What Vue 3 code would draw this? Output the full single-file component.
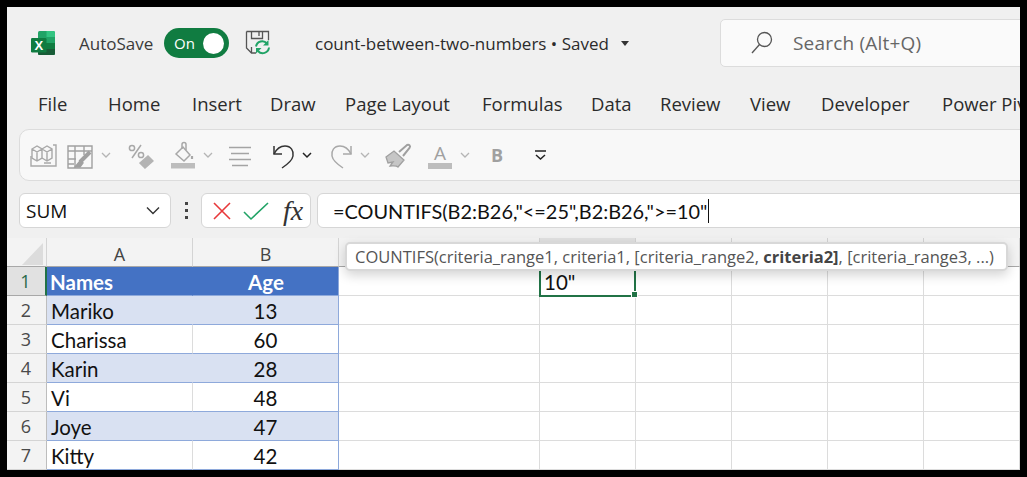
<script setup>
const tabs = ['File', 'Home', 'Insert', 'Draw', 'Page Layout', 'Formulas', 'Data', 'Review', 'View', 'Developer', 'Power Pivot']
const people = [
  ['Mariko', 13], ['Charissa', 60], ['Karin', 28], ['Vi', 48], ['Joye', 47], ['Kitty', 42]
]
const spare = [1, 2, 3, 4, 5]
</script>

<template>
  <div class="app">
    <header class="titlebar">
      <svg class="logo" width="24" height="24" viewBox="0 0 24 24">
        <rect x="7" y="0" width="17" height="24" rx="1.5" fill="#21a366" />
        <path d="M15.5 0H22.5A1.5 1.5 0 0 1 24 1.5V6H15.5Z" fill="#33c481" />
        <rect x="15.5" y="6" width="8.5" height="6" fill="#21a366" />
        <rect x="7" y="12" width="17" height="6" fill="#107c41" />
        <path d="M7 18H24V22.5A1.5 1.5 0 0 1 22.5 24H8.5A1.5 1.5 0 0 1 7 22.5Z" fill="#185c37" />
        <rect x="0" y="7" width="15.5" height="14.5" rx="1.2" fill="#107c41" />
        <text x="7.8" y="18.6" class="logo-x" text-anchor="middle">X</text>
      </svg>
      <span class="autosave">AutoSave</span>
      <span class="toggle"><span class="toggle-label">On</span><span class="knob"></span></span>
      <svg class="save" width="26" height="26" viewBox="0 0 26 26" fill="none">
        <path d="M1.5 1.500H23.500V10M1.500 1.500V18L6.500 23H11" stroke="#555" stroke-width="1.3" />
        <path d="M6.500 1.500V8.500H17.500V1.500M14 1.500V6M6.500 17V23" stroke="#555" stroke-width="1.3" />
        <path d="M11 16.500A6.300 6.300 0 0 1 22 13.500M24 17.500A6.300 6.300 0 0 1 13 21" stroke="#21a366" stroke-width="2" />
        <path d="M23.500 10V15.500H18ZM11 23.500V18H16.500Z" fill="#21a366" />
      </svg>
      <span class="doc">count-between-two-numbers • Saved</span>
      <span class="doc-caret"></span>
      <div class="search">
        <svg width="26" height="26" viewBox="0 0 26 26" fill="none" stroke="#555" stroke-width="1.3">
          <circle cx="15.500" cy="9.500" r="7" />
          <path d="M10.500 14.500L3 23" />
        </svg>
        <span class="search-text">Search (Alt+Q)</span>
      </div>
    </header>

    <nav class="tabs">
      <span v-for="tab in tabs" :key="tab" class="tab">{{ tab }}</span>
    </nav>

    <div class="ribbon">
      <svg width="28" height="28" viewBox="0 0 28 28" fill="none" stroke="#a8a8a8" stroke-width="1.4">
        <path d="M2 8L7 5L12 8V17L7 20L2 17ZM2 8L7 11L12 8M7 11V20" />
        <path d="M12 8L17 5L22 8V17L17 20L12 17M12 8L17 11L22 8M17 11V20" />
        <path d="M23 4H26V25H1V15M14 22H21" />
      </svg>
      <svg width="28" height="28" viewBox="0 0 28 28" fill="none" stroke="#a0a0a0" stroke-width="1.4">
        <path d="M2 5H26V27H2ZM2 10H26M9 5V27M18 5V14M2 18H10M2 23H8" />
        <path d="M24 11L14 21" stroke-width="4" />
        <path d="M14 20L9 26H14L17 22Z" fill="#a0a0a0" />
      </svg>
      <svg width="14" height="28" viewBox="0 0 14 28" fill="none" stroke="#b5b5b5" stroke-width="1.3"><path d="M3 12L7 16L11 12" /></svg>
      <svg width="28" height="28" viewBox="0 0 28 28" fill="none" stroke="#a8a8a8" stroke-width="1.500">
        <circle cx="6" cy="7" r="2.600" /><circle cx="15" cy="14" r="2.600" />
        <path d="M15 4L6 17" />
        <path d="M14 22L22 15L27 20L19 27Z" fill="#b4b4b4" stroke="#b4b4b4" />
      </svg>
      <svg width="28" height="28" viewBox="0 0 28 28" fill="none" stroke="#a8a8a8" stroke-width="1.500">
        <path d="M7 13L14 6L21 14L15 20Z" />
        <path d="M13 8V3.500A2 2 0 0 1 17 3.500V9" />
        <path d="M23 15V18" stroke-width="2.200" />
        <rect x="2" y="22" width="24" height="5.500" fill="#bdbdbd" stroke="none" />
      </svg>
      <svg width="14" height="28" viewBox="0 0 14 28" fill="none" stroke="#b5b5b5" stroke-width="1.3"><path d="M3 12L7 16L11 12" /></svg>
      <svg width="28" height="28" viewBox="0 0 28 28" fill="none" stroke="#a4a4a4" stroke-width="1.500">
        <path d="M3 6.500H25M5 12.500H23M3 18.500H25M6 24.500H22" />
      </svg>
      <svg width="28" height="28" viewBox="0 0 28 28" fill="none" stroke="#333" stroke-width="1.500">
        <path d="M4 5V13H12" />
        <path d="M4 13C7 7 11 5 15 5C21 5 24 10 23 15C22.500 18 18 23 12 27" />
      </svg>
      <svg width="14" height="28" viewBox="0 0 14 28" fill="none" stroke="#222" stroke-width="1.500"><path d="M3 12L7 16L11 12" /></svg>
      <svg width="28" height="28" viewBox="0 0 28 28" fill="none" stroke="#a8a8a8" stroke-width="1.500">
        <path d="M24 5V13H16" />
        <path d="M24 13C21 7 17 5 13 5C7 5 4 10 5 15C5.500 18 10 23 16 27" />
      </svg>
      <svg width="14" height="28" viewBox="0 0 14 28" fill="none" stroke="#b5b5b5" stroke-width="1.3"><path d="M3 12L7 16L11 12" /></svg>
      <svg width="28" height="28" viewBox="0 0 28 28" fill="#c6c6c6" stroke="#a0a0a0" stroke-width="1.300">
        <path d="M2 16L10 10L20 19L14 26C12 24 9 25 6 25L9 21L4 22Z" />
        <path d="M15 11L23 4C25 3 27 5 25.500 7L19 15" fill="none" stroke-width="2" />
      </svg>
      <svg width="28" height="28" viewBox="0 0 28 28">
        <text x="14" y="19" class="glyph-a" text-anchor="middle">A</text>
        <rect x="2" y="22" width="24" height="6" fill="#bdbdbd" />
      </svg>
      <svg width="14" height="28" viewBox="0 0 14 28" fill="none" stroke="#b5b5b5" stroke-width="1.3"><path d="M3 12L7 16L11 12" /></svg>
      <span class="bold-b">B</span>
      <svg width="26" height="28" viewBox="0 0 26 28" fill="none" stroke="#222" stroke-width="1.500">
        <path d="M8 10H19" /><path d="M9 14L13.500 18L18 14" />
      </svg>
    </div>

    <div class="formula-row">
      <div class="namebox">
        <span>SUM</span>
        <svg width="16" height="10" viewBox="0 0 16 10" fill="none" stroke="#333" stroke-width="1.400"><path d="M2 1.500L8 7.500L14 1.500" /></svg>
      </div>
      <div class="dots"><i></i><i></i><i></i></div>
      <div class="fxbox">
        <svg width="20" height="20" viewBox="0 0 20 20" fill="none" stroke="#e8383a" stroke-width="1.600"><path d="M2 2L18 18M18 2L2 18" /></svg>
        <svg width="26" height="20" viewBox="0 0 26 20" fill="none" stroke="#21a366" stroke-width="1.600"><path d="M1 11L8 18L25 2" /></svg>
        <span class="fx">fx</span>
      </div>
      <div class="formula">=COUNTIFS(B2:B26,"&lt;=25",B2:B26,"&gt;=10"<span class="caret"></span></div>
    </div>

    <div class="sheet">
      <div class="corner"><span class="tri"></span></div>
      <div class="colhead">A</div>
      <div class="colhead">B</div>
      <div class="colhead"></div>
      <div class="colhead active"></div>
      <div class="colhead"></div>
      <div class="colhead"></div>
      <div class="colhead"></div>
      <div class="colhead"></div>

      <div class="rowhead active">1</div>
      <div class="cell th">Names</div>
      <div class="cell th center">Age</div>
      <div class="cell"></div>
      <div class="cell selected">10"<span class="handle"></span></div>
      <div class="cell"></div>
      <div class="cell"></div>
      <div class="cell"></div>
      <div class="cell"></div>

      <template v-for="(p, i) in people" :key="p[0]">
        <div class="rowhead">{{ i + 2 }}</div>
        <div class="cell data" :class="{ band: i % 2 === 0 }">{{ p[0] }}</div>
        <div class="cell data center last" :class="{ band: i % 2 === 0 }">{{ p[1] }}</div>
        <div class="cell"></div>
        <div v-for="n in spare" :key="n" class="cell"></div>
      </template>

      <div class="tip">COUNTIFS(criteria_range1, criteria1, [criteria_range2, <b>criteria2]</b>, [criteria_range3, ...)</div>
    </div>
  </div>
</template>

<style scoped>
.app {
  width: 1013px;
  height: 463px;
  background: #f0f0f0;
  overflow: hidden;
  font-family: "Open Sans", "Noto Sans", sans-serif;
  color: #333;
}
.titlebar {
  height: 72px;
  display: flex;
  align-items: center;
  padding-left: 24px;
  box-sizing: border-box;
}
.titlebar > * { flex: none; }
.logo-x { font: 700 13px "Liberation Sans", sans-serif; fill: #fff; }
.autosave { margin-left: 24px; width: 85px; font-size: 17px; color: #3a3a3a; white-space: nowrap; }
.toggle {
  width: 65px;
  height: 30px;
  border-radius: 15px;
  background: #107c41;
  display: flex;
  align-items: center;
  justify-content: space-between;
  padding: 0 5px 0 10px;
  box-sizing: border-box;
  color: #fff;
  font-size: 15px;
}
.knob { width: 21px; height: 21px; border-radius: 50%; background: #fff; }
.save { margin-left: 16px; }
.doc { margin-left: 44px; width: 306px; font-size: 17px; color: #2b2b2b; white-space: nowrap; }
.doc-caret { width: 0; height: 0; border: 4.500px solid transparent; border-top: 5px solid #333; border-bottom: 0; }
.search {
  margin-left: 91px;
  width: 320px;
  height: 48px;
  background: #fafafa;
  border: 1px solid #dcdcdc;
  border-radius: 5px;
  display: flex;
  align-items: center;
  padding-left: 28px;
  box-sizing: border-box;
}
.search-text { margin-left: 18px; font-size: 19px; letter-spacing: 0.2px; color: #666; white-space: nowrap; }
.tabs {
  height: 50px;
  padding: 0 0 2px 31px;
  box-sizing: border-box;
  display: grid;
  grid-template-columns: 70px 84px 78px 75px 137px 109px 69px 90px 71px 121px 200px;
  align-items: center;
  font-size: 18.500px;
  color: #2b2b2b;
  white-space: nowrap;
}
.ribbon {
  margin-left: 12px;
  width: 1040px;
  height: 52px;
  box-sizing: border-box;
  background: #f8f8f8;
  border: 1px solid #dcdcdc;
  border-radius: 10px;
  padding-left: 10px;
  display: grid;
  grid-template-columns: 36px 33px 27px 43px 32px 25px 44px 30px 27px 31px 26px 42px 32px 26px 43px 30px;
  align-items: center;
}
.glyph-a { font: 400 19px "Open Sans", sans-serif; fill: #a0a0a0; }
.bold-b { font: 700 18px "Open Sans", sans-serif; color: #a0a0a0; width: 26px; text-align: center; }
.formula-row {
  margin-top: 12px;
  margin-left: 12px;
  height: 35px;
  display: flex;
  align-items: stretch;
}
.namebox, .fxbox, .formula {
  box-sizing: border-box;
  background: #fff;
  border: 1px solid #d6d6d6;
  border-radius: 6px;
  display: flex;
  align-items: center;
  flex: none;
}
.namebox {
  width: 152px;
  padding: 0 9px 0 6px;
  justify-content: space-between;
  font-size: 19px;
  color: #111;
}
.dots { width: 30px; display: flex; flex-direction: column; align-items: center; justify-content: center; gap: 4px; flex: none; }
.dots i { width: 3px; height: 3px; background: #444; display: block; }
.fxbox { width: 110px; padding-left: 10px; }
.fxbox svg + svg { margin-left: 11px; }
.fx { margin-left: 14px; font: italic 28px/1 "Liberation Serif", serif; color: #333; }
.formula {
  margin-left: 6px;
  width: 720px;
  padding-left: 15px;
  font: 19.900px "Lato", sans-serif;
  color: #111;
  white-space: nowrap;
}
.caret { display: inline-block; width: 1px; height: 24px; background: #111; margin-left: 1px; }
.sheet {
  margin-top: 10px;
  position: relative;
  display: grid;
  grid-template-columns: 40px 146px 146px 201px 96px 96px 96px 96px 96px;
  grid-auto-rows: 29px;
  background: #fff;
}
.corner, .colhead {
  background: #f3f3f3;
  box-sizing: border-box;
  border-bottom: 1px solid #a8a8a8;
}
.corner { position: relative; border-right: 1px solid #d4d4d4; }
.tri {
  position: absolute;
  right: 3px;
  bottom: 1px;
  width: 0;
  height: 0;
  border-left: 21px solid transparent;
  border-bottom: 22px solid #dcdcdc;
}
.colhead {
  border-right: 1px solid #d4d4d4;
  display: flex;
  align-items: flex-end;
  justify-content: center;
  font: 18px "Open Sans", sans-serif;
  color: #444;
}
.colhead.active { background: #e1e1e1; }
.rowhead {
  background: #f3f3f3;
  box-sizing: border-box;
  border-right: 1px solid #bdbdbd;
  border-bottom: 1px solid #d4d4d4;
  display: flex;
  align-items: center;
  justify-content: center;
  padding-right: 1px;
  font: 18px "Open Sans", sans-serif;
  color: #4a4a4a;
}
.rowhead.active { background: #e1e1e1; border-right: 2px solid #217346; border-bottom-color: #a8a8a8; color: #2a6a4a; }
.cell {
  box-sizing: border-box;
  border-right: 1px solid #dcdcdc;
  border-bottom: 1px solid #dcdcdc;
  display: flex;
  align-items: center;
  padding: 1px 0 0 4px;
  font: 20.500px "Lato", sans-serif;
  color: #111;
  white-space: nowrap;
}
.center { justify-content: center; padding-left: 0; }
.th { background: #4472c4; color: #fff; font-weight: 700; border-right-color: #4472c4; border-bottom-color: #8ea9db; padding-left: 3px; }
.th.center { border-right-color: #8ea9db; padding-left: 1px; }
.data { border-bottom-color: #8ea9db; }
.band { background: #d9e1f2; border-right-color: #d9e1f2; }
.last { border-right-color: #8ea9db; }
.selected { position: relative; }
.selected::after {
  content: "";
  position: absolute;
  inset: -1px -1px -2px -1px;
  border: 2px solid #217346;
  pointer-events: none;
}
.handle {
  position: absolute;
  right: -3px;
  bottom: -3px;
  width: 5px;
  height: 5px;
  background: #217346;
  border: 1px solid #fff;
  z-index: 1;
}
.tip {
  position: absolute;
  left: 338px;
  top: 4px;
  width: 663px;
  height: 29px;
  box-sizing: border-box;
  padding-left: 8px;
  display: flex;
  align-items: center;
  white-space: pre;
  background: #fff;
  border: 2px solid #d8d8d8;
  border-radius: 5px;
  box-shadow: 0 4px 12px rgba(0, 0, 0, 0.18);
  font-size: 16.500px;
  color: #555;
  z-index: 2;
}
.tip b { color: #444; }
</style>

<style>
html, body { margin: 0; height: 477px; overflow: hidden; background: #000; }
#app { padding: 7px; box-sizing: border-box; height: 477px; }
</style>
